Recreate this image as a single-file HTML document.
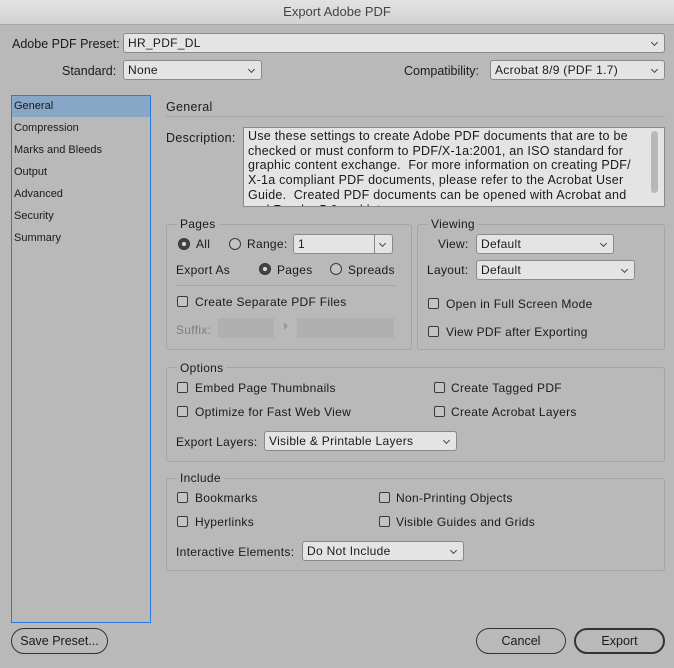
<!DOCTYPE html>
<html><head><style>
*{box-sizing:border-box;margin:0;padding:0}
body{width:674px;height:668px;background:#b9b9b9;font-family:"Liberation Sans",sans-serif;font-size:12px;color:#1a1a1a;position:relative;overflow:hidden;letter-spacing:0.3px}
.a{position:absolute;white-space:nowrap;line-height:14px}
.sel{position:absolute;background:#e4e4e4;border:1px solid #8a8a8a;border-radius:3px;padding-left:4px;line-height:18px;height:20px}
.sel::after{content:"";position:absolute;right:7px;top:6px;width:4px;height:4px;border-right:1px solid #444;border-bottom:1px solid #444;transform:rotate(45deg)}
.box{position:absolute;border:1px solid #a5a5a5;border-radius:3px}
.cb{position:absolute;width:11px;height:11px;border:1px solid #3a3a3a;border-radius:2px;background:#c4c4c4}
.rb{position:absolute;width:12px;height:12px;border:1px solid #3a3a3a;border-radius:50%;background:#c4c4c4}
.rb.on{background:#444;border-color:#333}
.rb.on::after{content:"";position:absolute;left:3px;top:3px;width:4px;height:4px;border-radius:50%;background:#ddd}
.btn{position:absolute;border:1px solid #333;border-radius:13px;text-align:center;line-height:24px;height:26px;font-size:12.5px;letter-spacing:0}
.lg{position:absolute;background:#b9b9b9;padding:0 3px;line-height:14px}
</style></head><body>
<div style="position:absolute;left:0;top:0;width:674px;height:25px;background:linear-gradient(#e2e2e2,#d2d2d2);border-bottom:1px solid #a8a8a8"></div>
<div class="a" style="left:0;width:674px;text-align:center;top:5px;font-size:13px;color:#444;letter-spacing:0">Export Adobe PDF</div>

<div class="a" style="left:12px;top:37px;font-size:12.5px;letter-spacing:0">Adobe PDF Preset:</div>
<div class="sel" style="left:123px;top:33px;width:542px">HR_PDF_DL</div>
<div class="a" style="left:62px;top:64px;font-size:12.5px;letter-spacing:0">Standard:</div>
<div class="sel" style="left:123px;top:60px;width:139px">None</div>
<div class="a" style="left:404px;top:64px;font-size:12.5px;letter-spacing:0">Compatibility:</div>
<div class="sel" style="left:490px;top:60px;width:175px">Acrobat 8/9 (PDF 1.7)</div>

<div style="position:absolute;left:11px;top:95px;width:140px;height:528px;border:1px solid #2a7ae2;background:#b9b9b9"></div>
<div style="position:absolute;left:12px;top:96px;width:138px;height:21px;background:#88a6c5"></div>
<div class="a" style="left:14px;top:99px;font-size:11px;letter-spacing:0">General</div>
<div class="a" style="left:14px;top:121px;font-size:11px;letter-spacing:0">Compression</div>
<div class="a" style="left:14px;top:143px;font-size:11px;letter-spacing:0">Marks and Bleeds</div>
<div class="a" style="left:14px;top:165px;font-size:11px;letter-spacing:0">Output</div>
<div class="a" style="left:14px;top:187px;font-size:11px;letter-spacing:0">Advanced</div>
<div class="a" style="left:14px;top:209px;font-size:11px;letter-spacing:0">Security</div>
<div class="a" style="left:14px;top:231px;font-size:11px;letter-spacing:0">Summary</div>

<div class="a" style="left:166px;top:100px;font-size:12.5px">General</div>
<div style="position:absolute;left:166px;top:116px;width:499px;height:1px;background:#a5a5a5"></div>
<div class="a" style="left:166px;top:131px;font-size:12.5px">Description:</div>
<div style="position:absolute;left:243px;top:127px;width:422px;height:80px;background:#e4e4e4;border:1px solid #8a8a8a;overflow:hidden;padding:1px 0 0 4px;line-height:14.7px;font-size:12.5px;white-space:nowrap;letter-spacing:0.25px">Use these settings to create Adobe PDF documents that are to be<br>checked or must conform to PDF/X-1a:2001, an ISO standard for<br>graphic content exchange.&nbsp; For more information on creating PDF/<br>X-1a compliant PDF documents, please refer to the Acrobat User<br>Guide.&nbsp; Created PDF documents can be opened with Acrobat and<br>and Reader 5.0 and later.</div>
<div style="position:absolute;left:651px;top:131px;width:7px;height:62px;border-radius:4px;background:#b8b8b8"></div>

<div class="box" style="left:166px;top:224px;width:246px;height:126px"></div>
<div class="lg" style="left:177px;top:217px">Pages</div>
<div class="rb on" style="left:178px;top:238px"></div><div class="a" style="left:196px;top:237px">All</div>
<div class="rb" style="left:229px;top:238px"></div><div class="a" style="left:247px;top:237px">Range:</div>
<div class="sel" style="left:293px;top:234px;width:100px">1</div>
<div style="position:absolute;left:374px;top:235px;width:1px;height:18px;background:#8a8a8a"></div>
<div class="a" style="left:176px;top:263px">Export As</div>
<div class="rb on" style="left:259px;top:263px"></div><div class="a" style="left:277px;top:263px">Pages</div>
<div class="rb" style="left:330px;top:263px"></div><div class="a" style="left:348px;top:263px">Spreads</div>
<div style="position:absolute;left:176px;top:285px;width:220px;height:1px;background:#a5a5a5"></div>
<div class="cb" style="left:177px;top:296px"></div><div class="a" style="left:195px;top:295px">Create Separate PDF Files</div>
<div class="a" style="left:176px;top:323px;color:#7d7d7d">Suffix:</div>
<div style="position:absolute;left:218px;top:318px;width:56px;height:20px;background:#b0b0b0"></div>
<div style="position:absolute;left:284px;top:322px;width:0;height:0;border-left:4px solid #9a9a9a;border-top:4px solid transparent;border-bottom:4px solid transparent"></div>
<div style="position:absolute;left:297px;top:318px;width:97px;height:20px;background:#b0b0b0"></div>

<div class="box" style="left:417px;top:224px;width:248px;height:126px"></div>
<div class="lg" style="left:428px;top:217px">Viewing</div>
<div class="a" style="left:438px;top:237px">View:</div>
<div class="sel" style="left:476px;top:234px;width:138px">Default</div>
<div class="a" style="left:427px;top:263px">Layout:</div>
<div class="sel" style="left:476px;top:260px;width:159px">Default</div>
<div class="cb" style="left:428px;top:298px"></div><div class="a" style="left:446px;top:297px">Open in Full Screen Mode</div>
<div class="cb" style="left:428px;top:326px"></div><div class="a" style="left:446px;top:325px">View PDF after Exporting</div>

<div class="box" style="left:166px;top:367px;width:499px;height:95px"></div>
<div class="lg" style="left:177px;top:361px">Options</div>
<div class="cb" style="left:177px;top:382px"></div><div class="a" style="left:195px;top:381px">Embed Page Thumbnails</div>
<div class="cb" style="left:434px;top:382px"></div><div class="a" style="left:451px;top:381px">Create Tagged PDF</div>
<div class="cb" style="left:177px;top:406px"></div><div class="a" style="left:195px;top:405px">Optimize for Fast Web View</div>
<div class="cb" style="left:434px;top:406px"></div><div class="a" style="left:451px;top:405px">Create Acrobat Layers</div>
<div class="a" style="left:176px;top:435px">Export Layers:</div>
<div class="sel" style="left:264px;top:431px;width:193px">Visible &amp; Printable Layers</div>

<div class="box" style="left:166px;top:478px;width:499px;height:93px"></div>
<div class="lg" style="left:177px;top:471px">Include</div>
<div class="cb" style="left:177px;top:492px"></div><div class="a" style="left:195px;top:491px">Bookmarks</div>
<div class="cb" style="left:379px;top:492px"></div><div class="a" style="left:396px;top:491px">Non-Printing Objects</div>
<div class="cb" style="left:177px;top:516px"></div><div class="a" style="left:195px;top:515px">Hyperlinks</div>
<div class="cb" style="left:379px;top:516px"></div><div class="a" style="left:396px;top:515px">Visible Guides and Grids</div>
<div class="a" style="left:176px;top:545px">Interactive Elements:</div>
<div class="sel" style="left:302px;top:541px;width:162px">Do Not Include</div>

<div class="btn" style="left:11px;top:628px;width:97px">Save Preset...</div>
<div class="btn" style="left:476px;top:628px;width:90px">Cancel</div>
<div class="btn" style="left:574px;top:628px;width:91px;border-width:2px;line-height:22px">Export</div>
</body></html>
